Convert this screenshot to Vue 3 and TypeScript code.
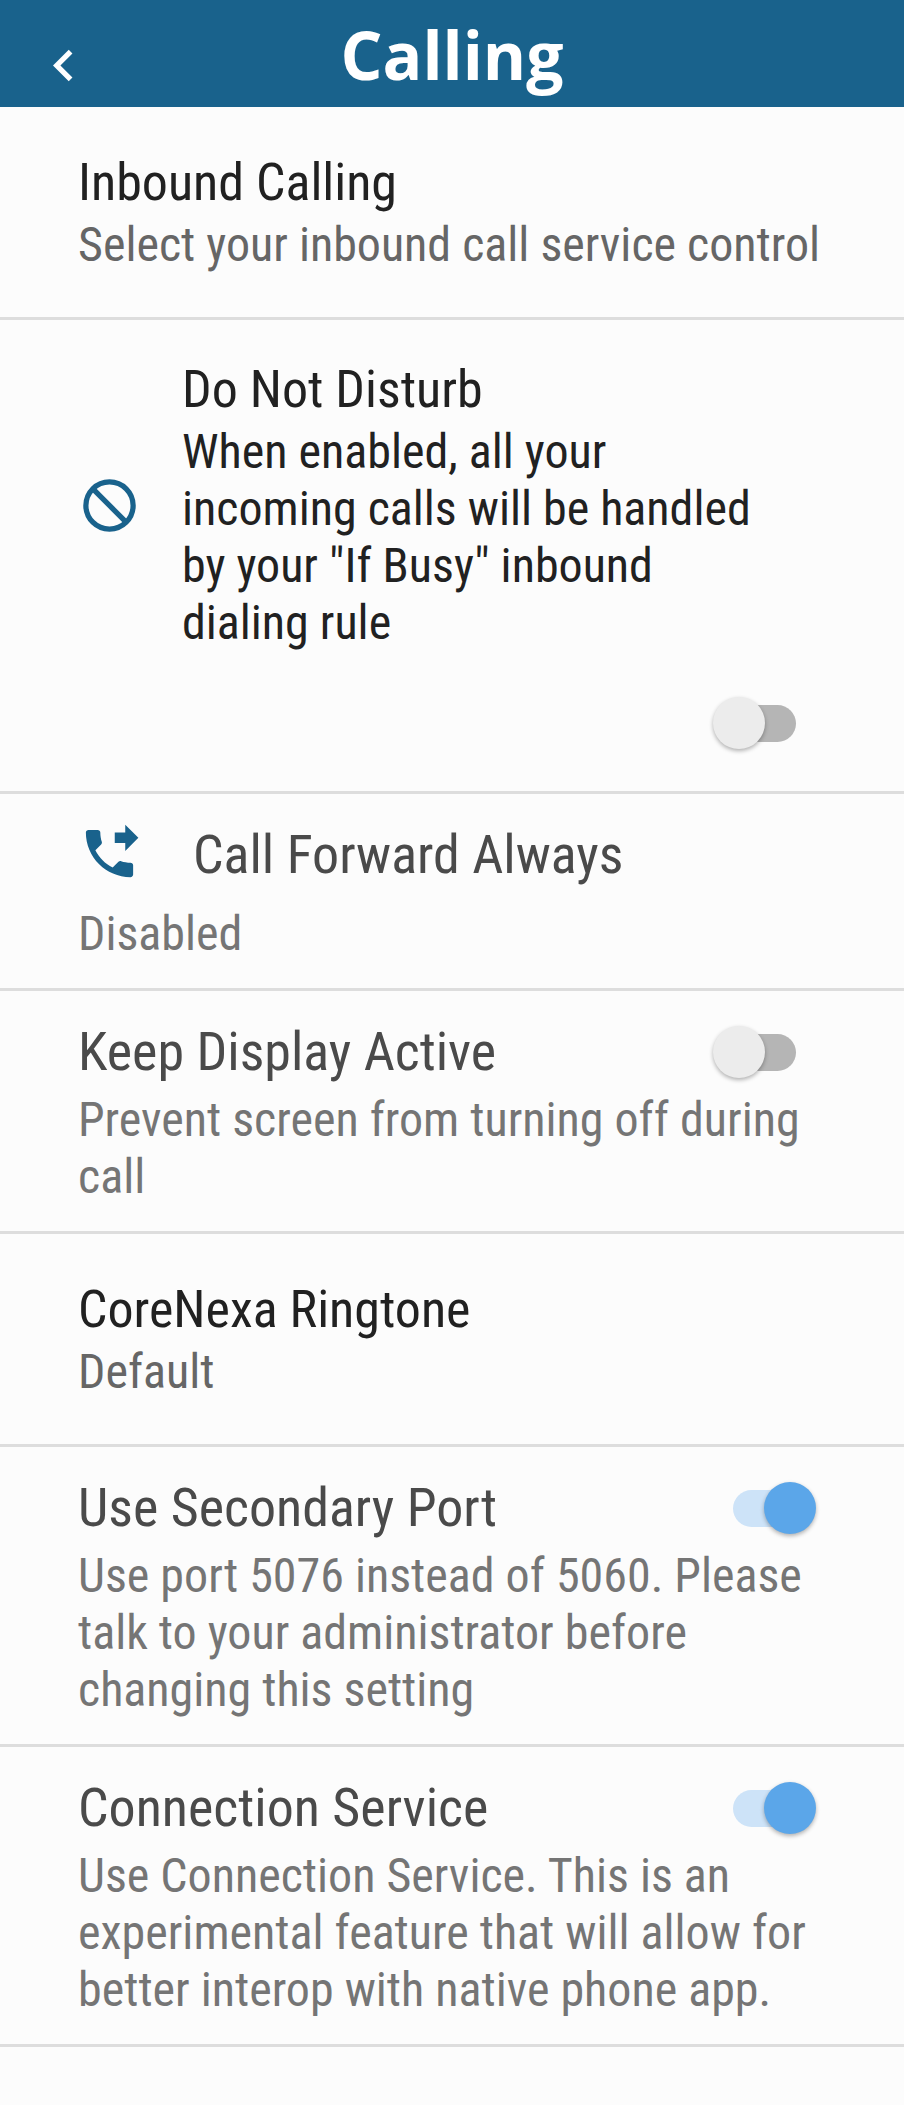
<script setup lang="ts">
import { ref } from 'vue'

const doNotDisturb = ref(false)
const keepDisplayActive = ref(false)
const useSecondaryPort = ref(true)
const connectionService = ref(true)
</script>

<template>
  <div class="screen">
    <header class="bar">
      <button class="back" type="button" aria-label="Back">
        <svg class="icon" viewBox="0 0 24 24" aria-hidden="true">
          <path d="M15.41 7.41L14 6l-6 6 6 6 1.41-1.41L10.83 12z" />
        </svg>
      </button>
      <h1>Calling</h1>
    </header>

    <main>
      <section class="row link">
        <h2>Inbound Calling</h2>
        <p>Select your inbound call service control</p>
      </section>

      <section class="row dnd">
        <div class="dnd-body">
          <svg class="icon" viewBox="0 0 24 24" aria-hidden="true">
            <g fill="none" stroke="currentColor" stroke-width="2">
              <circle cx="12" cy="12" r="9" />
              <path d="M5.6 5.6L18.4 18.4" />
            </g>
          </svg>
          <div class="dnd-text">
            <h2><label for="dnd">Do Not Disturb</label></h2>
            <p>When enabled, all your incoming calls will be handled by your "If Busy" inbound dialing rule</p>
          </div>
        </div>
        <div class="dnd-control">
          <input id="dnd" v-model="doNotDisturb" class="switch" type="checkbox" role="switch" />
        </div>
      </section>

      <section class="row setting forward">
        <div class="heading">
          <svg class="icon" viewBox="0 0 24 24" aria-hidden="true">
            <path d="M18 11l5-5-5-5v3h-4v4h4v3zm2 4.5c-1.25 0-2.45-.2-3.57-.57-.35-.11-.74-.03-1.02.24l-2.2 2.2c-2.83-1.44-5.15-3.75-6.59-6.59l2.2-2.21c.28-.26.36-.65.25-1C8.7 6.45 8.5 5.25 8.5 4c0-.55-.45-1-1-1H4c-.55 0-1 .45-1 1 0 9.39 7.61 17 17 17 .55 0 1-.45 1-1v-3.5c0-.55-.45-1-1-1z" />
          </svg>
          <h2>Call Forward Always</h2>
        </div>
        <p>Disabled</p>
      </section>

      <section class="row setting">
        <div class="heading">
          <h2><label for="display">Keep Display Active</label></h2>
          <input id="display" v-model="keepDisplayActive" class="switch" type="checkbox" role="switch" />
        </div>
        <p>Prevent screen from turning off during call</p>
      </section>

      <section class="row link">
        <h2>CoreNexa Ringtone</h2>
        <p>Default</p>
      </section>

      <section class="row setting">
        <div class="heading wide">
          <h2><label for="port">Use Secondary Port</label></h2>
          <input id="port" v-model="useSecondaryPort" class="switch" type="checkbox" role="switch" />
        </div>
        <p>Use port 5076 instead of 5060. Please talk to your administrator before changing this setting</p>
      </section>

      <section class="row setting">
        <div class="heading wide">
          <h2><label for="service">Connection Service</label></h2>
          <input id="service" v-model="connectionService" class="switch" type="checkbox" role="switch" />
        </div>
        <p>Use Connection Service. This is an experimental feature that will allow for better interop with native phone app.</p>
      </section>
    </main>
  </div>
</template>

<style>
body {
  margin: 0;
  background: #fcfcfc;
}
</style>

<style scoped>
.screen {
  min-height: 100vh;
  background: #fcfcfc;
  color: #212121;
  font-family: "Roboto Condensed", Roboto, sans-serif;
}

.bar {
  display: grid;
  grid-template-columns: 1fr auto 1fr;
  align-items: center;
  height: 107px;
  background: #19628c;
  color: #fff;
}

.back {
  justify-self: start;
  display: flex;
  padding: 24px 0 0 32px;
  border: 0;
  background: none;
  color: inherit;
  cursor: pointer;
}

h1 {
  margin: 0;
  padding-top: 2px;
  font: 700 66px/105px "Open Sans", sans-serif;
}

.icon {
  display: block;
  flex: none;
  width: 63px;
  height: 63px;
  fill: currentColor;
}

.row {
  border-bottom: 3px solid #ddd;
}

h2 {
  margin: 0;
  font-size: 52px;
  font-weight: 400;
  line-height: 60px;
}

p {
  margin: 3px 0 0;
  font-size: 48px;
  line-height: 57px;
}

.link {
  padding: 46px 64px 44px 78px;
}

.link p {
  color: #666;
}

.dnd {
  padding: 40px 108px 42px 78px;
}

.dnd-body {
  display: flex;
  align-items: center;
  gap: 41px;
}

.dnd .icon,
.forward .icon {
  color: #19628c;
}

.dnd-text {
  flex: 1;
  margin-right: 20px;
}

.dnd-control {
  display: flex;
  justify-content: flex-end;
  margin-top: 46px;
}

.setting {
  padding: 31px 88px 26px 78px;
  color: #4a4a4a;
}

.setting h2 {
  font-size: 54px;
}

.setting p {
  margin-top: 9px;
  color: #757575;
}

.heading {
  display: flex;
  align-items: center;
  justify-content: space-between;
  height: 60px;
  margin-right: 20px;
}

.heading.wide {
  margin-right: 0;
}

.forward .heading {
  align-items: flex-end;
  justify-content: flex-start;
  gap: 52px;
}

.forward p {
  margin-top: 20px;
}

.switch {
  appearance: none;
  position: relative;
  flex: none;
  width: 83px;
  height: 52px;
  margin: 0;
  cursor: pointer;
}

.switch::before {
  content: "";
  position: absolute;
  inset: 8px 0 7px 12px;
  border-radius: 20px;
  background: #b5b5b5;
}

.switch::after {
  content: "";
  position: absolute;
  top: 0;
  left: 0;
  width: 52px;
  height: 52px;
  border-radius: 50%;
  background: #ececec;
  box-shadow: 0 2px 4px rgba(0, 0, 0, 0.3);
}

.switch:checked::before {
  inset: 8px 12px 7px 0;
  background: #cde3f8;
}

.switch:checked::after {
  left: 31px;
  background: #5ba6e9;
}
</style>
